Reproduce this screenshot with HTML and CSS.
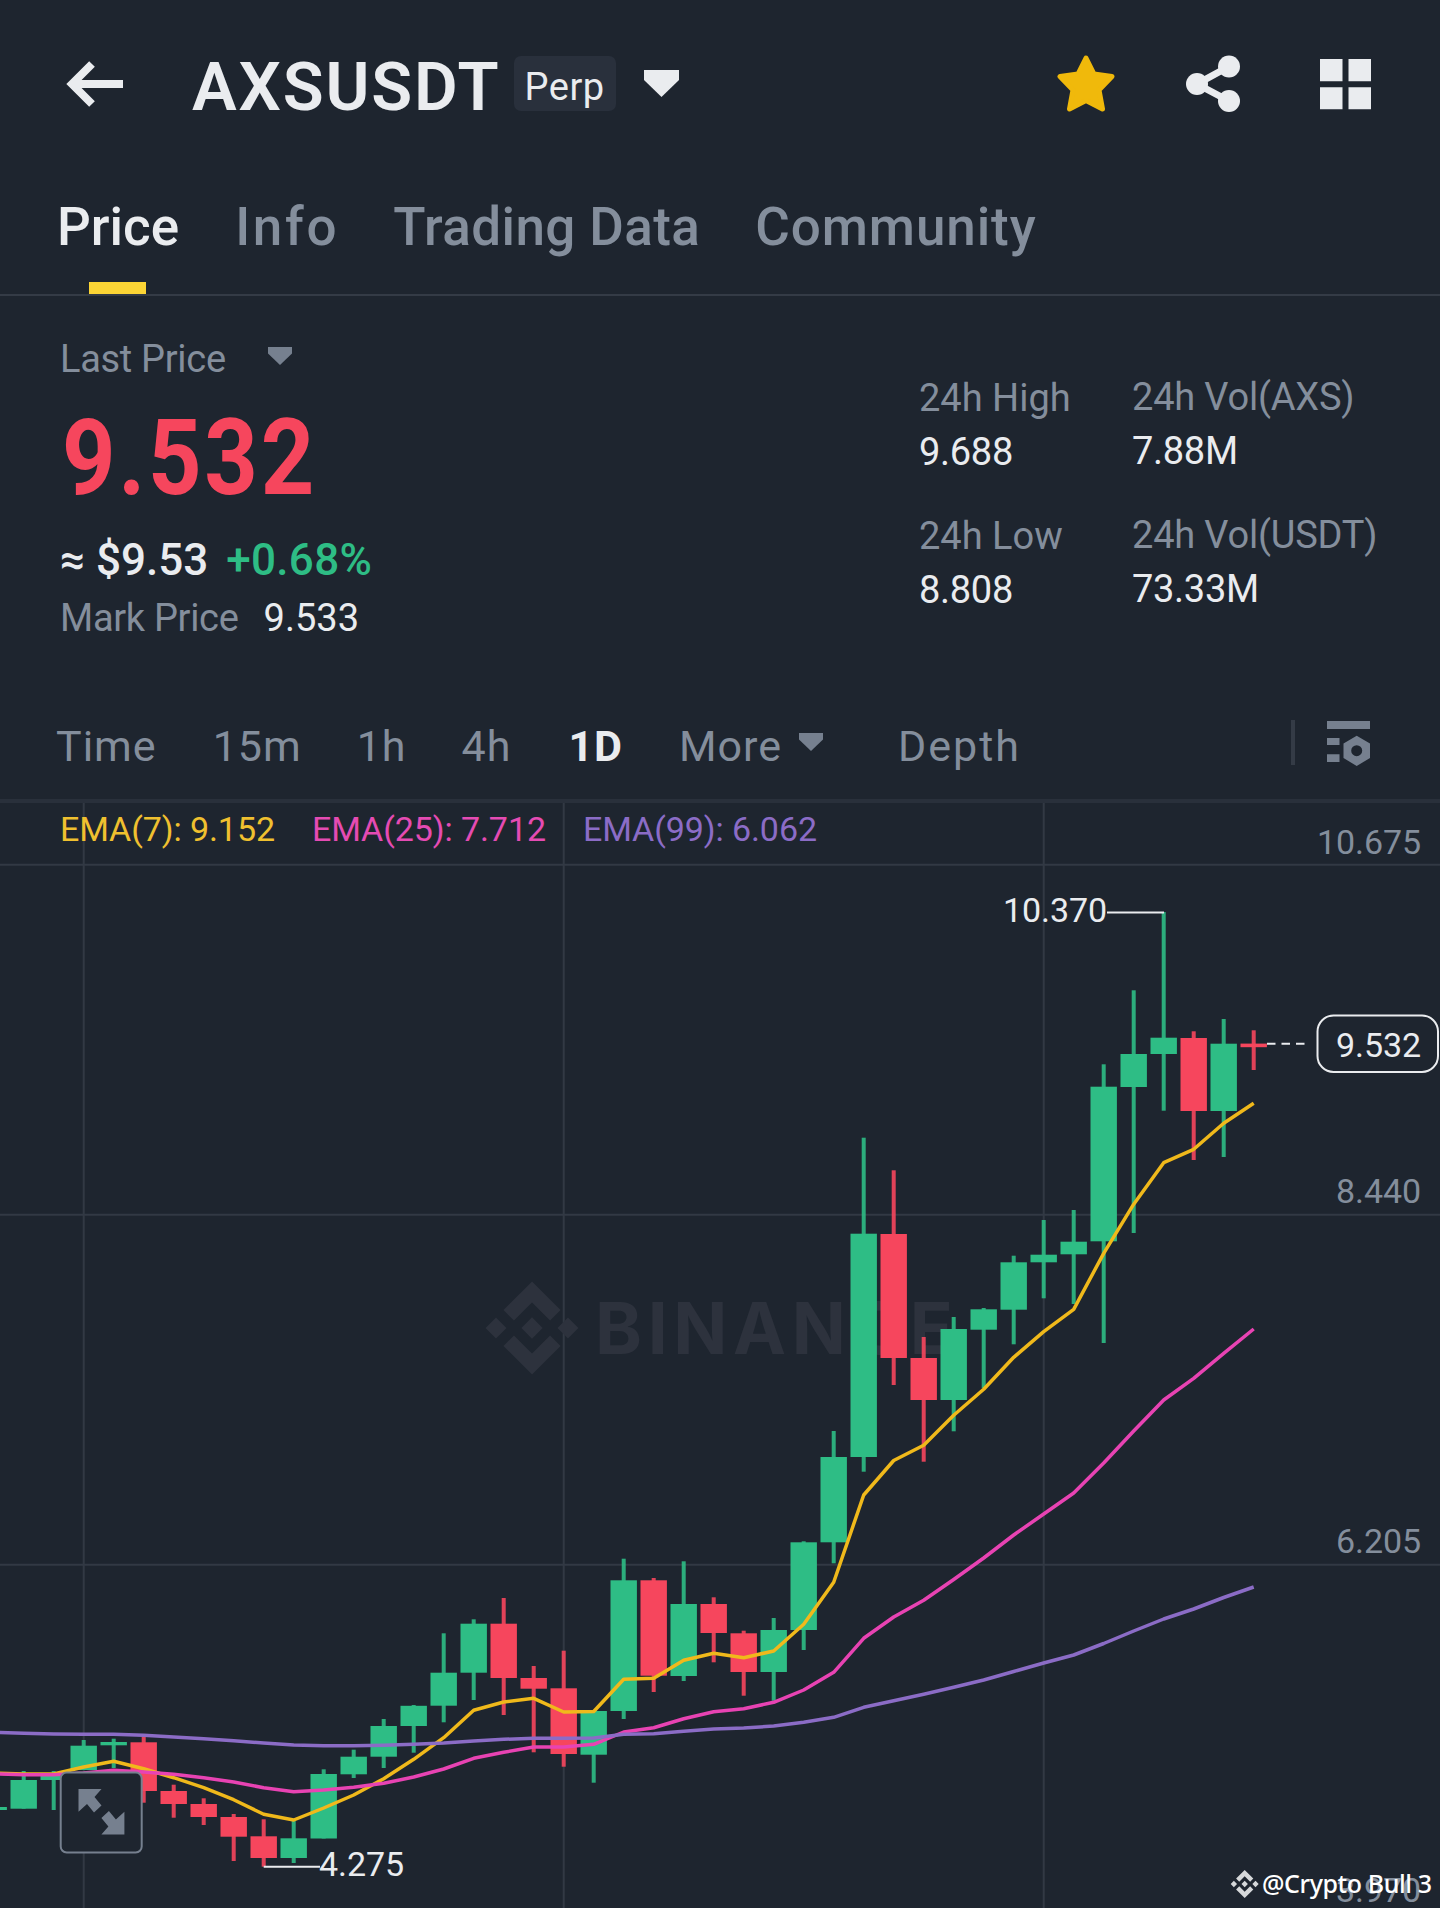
FILE: index.html
```html
<!DOCTYPE html>
<html lang="en">
<head>
  <meta charset="UTF-8" />
  <title>AXSUSDT Perp</title>
  <link rel="stylesheet" href="styles.css">
</head>
<body>

  <header class="topbar">
    <svg class="back" width="60" height="48" viewBox="0 0 60 48">
      <path d="M26 4 L6 24 L26 44 M6 24 H57" fill="none" stroke="#eaecef" stroke-width="8" />
    </svg>
    <h1>AXSUSDT</h1>
    <span class="perp">Perp</span>
    <svg class="caret" width="36" height="28" viewBox="0 0 36 28"><path d="M0 0H35V10L17.500 27L0 10Z" fill="#eaecef" /></svg>
    <div class="actions">
      <svg width="58" height="58" viewBox="0 0 58 58">
        <path d="M29 3L37 19L55 21.500L42 35L45.500 54L29 45.500L12.500 54L16 35L3 21.500L21 19Z" fill="#f0b90b" stroke="#f0b90b" stroke-width="5" stroke-linejoin="round" />
      </svg>
      <svg width="54" height="58" viewBox="0 0 54 58" fill="#eaecef">
        <path d="M43 11.500L11 29L43 46" fill="none" stroke="#eaecef" stroke-width="7" />
        <circle cx="43" cy="11.500" r="11" /><circle cx="11" cy="29" r="11" /><circle cx="43" cy="46" r="11" />
      </svg>
      <svg width="52" height="52" viewBox="0 0 52 52" fill="#eaecef">
        <path d="M0 1H22.500V23.300H0ZM28.500 1H51V23.300H28.500ZM0 29.300H22.500V51.300H0ZM28.500 29.300H51V51.300H28.500Z" />
      </svg>
    </div>
  </header>

  <nav class="tabs">
    <a class="active">Price</a>
    <a class="info">Info</a>
    <a class="trading">Trading Data</a>
    <a class="community">Community</a>
  </nav>

  <section class="summary">
    <div class="quote">
      <div class="label">
        <span>Last Price</span>
        <svg width="24" height="18" viewBox="0 0 24 18"><path d="M0 0H24V6.500L12 18L0 6.500Z" fill="#76808f" /></svg>
      </div>
      <div class="last">9.532</div>
      <div class="fiat"><span>≈ $9.53</span><span class="up">+0.68%</span></div>
      <div class="mark"><span>Mark Price</span><b>9.533</b></div>
    </div>
    <div class="stats">
      <div class="stat"><span>24h High</span><b>9.688</b></div>
      <div class="stat"><span>24h Low</span><b>8.808</b></div>
    </div>
    <div class="stats vol">
      <div class="stat"><span>24h Vol(AXS)</span><b>7.88M</b></div>
      <div class="stat"><span>24h Vol(USDT)</span><b>73.33M</b></div>
    </div>
  </section>

  <nav class="frames">
    <a>Time</a>
    <a class="minutes">15m</a>
    <a>1h</a>
    <a>4h</a>
    <a class="active">1D</a>
    <a class="more">More
      <svg width="24" height="18" viewBox="0 0 24 18"><path d="M0 0H24V6.500L12 18L0 6.500Z" fill="#76808f" /></svg>
    </a>
    <a class="depth">Depth</a>
    <span class="divider"></span>
    <svg class="prefs" width="44" height="46" viewBox="0 0 44 46" fill="#76808f">
      <path d="M0 0H43V8H0ZM0 17H12.500V24H0ZM0 33.300H12.500V41H0Z" />
      <path fill-rule="evenodd" d="M29.700 14.700L43 22.500V37L29.700 45L16.500 37V22.500ZM29.700 24.200A5.500 5.500 0 1 0 29.700 35.200A5.500 5.500 0 1 0 29.700 24.200Z" />
    </svg>
  </nav>

  <!-- chart coordinates are page pixels, the first 803 belong to the header -->
  <svg class="chart" width="1440" height="1105" viewBox="0 803 1440 1105">
    <path class="grid" d="M83.700 803V1908M563.700 803V1908M1043.700 803V1908M0 864.700H1440M0 1214.700H1440M0 1564.700H1440" />

    <g class="watermark">
      <path transform="translate(485.500 1281.500) scale(.7345)" d="M38.730 53.200l24.590-24.580 24.600 24.600 14.300-14.310L63.320 0 24.430 38.900zM0 63.310l14.300-14.310 14.310 14.310-14.310 14.300zM38.730 73.410L63.320 98l24.600-24.600 14.310 14.290-38.900 38.910L24.430 87.730zM98 63.310l14.300-14.310 14.310 14.300-14.310 14.320zM77.830 63.300L63.320 48.780 48.810 63.270l14.510 14.530z" />
      <text x="595" y="1354" textLength="358">BINANCE</text>
    </g>

    <g id="candles"></g>
    <g id="lines"></g>

    <text class="ema7" x="60" y="841" textLength="215">EMA(7): 9.152</text>
    <text class="ema25" x="312" y="841" textLength="234">EMA(25): 7.712</text>
    <text class="ema99" x="583" y="841" textLength="234">EMA(99): 6.062</text>

    <text class="axis" x="1317" y="854" textLength="104">10.675</text>
    <text class="axis" x="1336" y="1203" textLength="85">8.440</text>
    <text class="axis" x="1336" y="1553" textLength="85">6.205</text>
    <text class="axis" x="1336" y="1902" textLength="85">3.970</text>

    <path class="pointer" d="M1107 912.500H1164M263.700 1866.700H320" />
    <text class="note" x="1003" y="922" textLength="104">10.370</text>
    <text class="note" x="319" y="1876" textLength="85">4.275</text>

    <path class="pointer" d="M1267 1043.700H1305" stroke-dasharray="8.500 6" />
    <rect class="tag" x="1317.500" y="1015.500" width="120.500" height="56.500" rx="16" />
    <text class="note" x="1336" y="1057" textLength="85">9.532</text>

    <g class="expand">
      <rect x="60.700" y="1772.500" width="81" height="80" rx="6" />
      <path d="M78.500 1789H101.500L94.500 1797L101.500 1805.500L94 1812.500L87 1804L78.500 1811.700ZM124.400 1834.400H101.400L108.400 1826.400L101.400 1817.900L108.900 1810.900L115.900 1819.400L124.400 1811.700Z" />
    </g>

    <g class="author">
      <path transform="translate(1230.700 1870) scale(.221)" d="M38.730 53.200l24.590-24.580 24.600 24.600 14.300-14.310L63.320 0 24.430 38.900zM0 63.310l14.300-14.310 14.310 14.310-14.310 14.300zM38.730 73.410L63.320 98l24.600-24.600 14.310 14.290-38.900 38.910L24.430 87.730zM98 63.310l14.300-14.310 14.310 14.300-14.310 14.320zM77.830 63.300L63.320 48.780 48.810 63.270l14.510 14.530z" />
      <text x="1262" y="1893" textLength="170">@Crypto Bull 3</text>
    </g>
  </svg>

  <script src="chart.js"></script>
</body>
</html>
```
FILE: styles.css
```css
body {
  margin: 0;
  width: 1440px;
  height: 1908px;
  overflow: hidden;
  background: #1e252f;
  color: #eaecef;
  font-family: Roboto, sans-serif;
}

svg {
  display: block;
  flex: none;
}

b {
  font-weight: 400;
}

.topbar {
  display: flex;
  align-items: center;
  box-sizing: border-box;
  height: 167px;
  padding: 0 68px 0 66px;
}

h1 {
  margin: 0 0 0 66px;
  padding-top: 7px;
  font-size: 67px;
  font-weight: 600;
  letter-spacing: 1.8px;
}

.perp {
  box-sizing: border-box;
  width: 102px;
  height: 55px;
  margin-left: 13px;
  padding: 6px 0 0 11px;
  border-radius: 7px;
  background: #29303c;
  font-size: 38px;
  line-height: 50px;
  letter-spacing: 0.5px;
}

.caret {
  margin-left: 28px;
}

.actions {
  display: flex;
  align-items: center;
  margin-left: auto;
}

.actions svg + svg {
  margin-left: 71px;
}

.actions svg:last-child {
  margin-left: 80px;
}

.tabs {
  display: flex;
  gap: 55px;
  height: 97px;
  padding: 30px 57px 0;
  border-bottom: 2px solid #343b46;
  font-size: 53px;
  font-weight: 500;
  line-height: 60px;
  color: #848e9c;
}

.tabs a {
  position: relative;
}

.tabs .active {
  color: #eaecef;
}

.tabs .active::after {
  content: "";
  position: absolute;
  left: 32px;
  top: 85px;
  width: 57px;
  height: 12px;
  background: #fcd535;
}

.info {
  margin-left: 1px;
  letter-spacing: 2.7px;
}

.trading {
  margin-left: -1px;
  letter-spacing: 0.4px;
}

.community {
  letter-spacing: 0.9px;
}

.summary {
  display: flex;
  height: 384px;
  font-size: 38px;
  line-height: 50px;
}

.quote {
  box-sizing: border-box;
  width: 919px;
  padding: 38px 0 0 60px;
}

.label {
  display: flex;
  align-items: center;
  gap: 42px;
  color: #848e9c;
}

.label span, .mark span {
  letter-spacing: -0.3px;
}

.label svg {
  margin-top: -7px;
}

.last {
  margin: 25px 0 0 2px;
  font-size: 105px;
  font-weight: 700;
  line-height: 100px;
  letter-spacing: 3px;
  color: #f6465d;
  transform: scaleX(0.89);
  transform-origin: left;
}

.fiat {
  display: flex;
  gap: 18px;
  margin-top: 23px;
  font-size: 44px;
  font-weight: 500;
  line-height: 56px;
}

.up {
  letter-spacing: 0.3px;
  color: #2ebd85;
}

.mark {
  display: flex;
  gap: 25px;
  margin-top: 5px;
  color: #848e9c;
}

.mark b {
  color: #eaecef;
}

.stats {
  width: 213px;
  padding-top: 75px;
}

.vol {
  width: auto;
  padding-top: 74px;
}

.vol .stat {
  letter-spacing: -0.2px;
}

.stat {
  margin-bottom: 30px;
  line-height: 54px;
  color: #848e9c;
}

.stat span, .stat b {
  display: block;
}

.stat b {
  letter-spacing: -0.3px;
  color: #eaecef;
}

.frames {
  display: flex;
  gap: 55px;
  box-sizing: border-box;
  height: 123px;
  padding: 41px 69px 0 56px;
  border-bottom: 4px solid #29303b;
  font-size: 43px;
  line-height: 50px;
  letter-spacing: 1px;
  color: #848e9c;
}

.minutes {
  margin-left: 1px;
}

.frames .active {
  margin-left: 2px;
  font-weight: 700;
  color: #eaecef;
}

.more {
  display: flex;
  gap: 17px;
  margin-left: 1px;
}

.more svg {
  margin-top: 12px;
}

.depth {
  margin-left: 20px;
  letter-spacing: 2px;
}

.divider {
  width: 4px;
  height: 45px;
  margin: -1px -23px 0 auto;
  background: #343b46;
}

.chart text {
  font-size: 34px;
}

.grid {
  stroke: #323944;
  stroke-width: 2;
}

.watermark {
  fill: #2d323d;
}

.watermark text {
  font-family: Inter, sans-serif;
  font-size: 71px;
  font-weight: 700;
}

#lines polyline {
  fill: none;
  stroke-width: 3.5;
  stroke-linejoin: round;
}

.ema7 { fill: #f0c02f; }
.ema25 { fill: #e54bb3; }
.ema99 { fill: #8b6cc6; }
.axis { fill: #848e9c; }
.note { fill: #eaecef; }

.pointer {
  fill: none;
  stroke: #eaecef;
  stroke-width: 2;
}

.tag {
  fill: #1e252f;
  stroke: #eaecef;
  stroke-width: 2;
}

.expand rect {
  fill: #1e252f;
  stroke: #76808f;
  stroke-width: 2;
}

.expand path {
  fill: #76808f;
}

.author {
  fill: #fff;
}

.author path {
  fill: #d6d8da;
}

.chart .author text {
  font-family: "Noto Sans", sans-serif;
  font-size: 25px;
  font-weight: 500;
}
```
FILE: chart.js
```js
const UP = "#2ebd85";
const DOWN = "#f6465d";
const STEP = 30;
const FIRST = -6.3;

// [direction, high, body top, body bottom, low]
const candles = [
  [1, 1807, 1807, 1810, 1810], [1, 1771, 1780, 1808.7, 1808.7], [1, 1771, 1776, 1780, 1810],
  [1, 1740, 1745.7, 1770, 1770], [1, 1738.7, 1742, 1745.3, 1768], [0, 1736.7, 1742.3, 1791, 1802.7],
  [0, 1784.7, 1791, 1804, 1817.7], [0, 1798.3, 1804, 1817, 1825], [0, 1814, 1817, 1836.7, 1861],
  [0, 1819.3, 1836.3, 1858, 1866.7], [1, 1821, 1838.3, 1858, 1863], [1, 1769.3, 1774, 1838.5, 1838.5],
  [1, 1749.7, 1756.7, 1774.3, 1778], [1, 1719, 1726, 1756.7, 1768], [1, 1705, 1705.8, 1726, 1752.7],
  [1, 1633.3, 1672.7, 1705.7, 1722.3], [1, 1619.3, 1623.7, 1672.7, 1700], [0, 1598, 1623.7, 1678, 1715],
  [0, 1666, 1678, 1688.7, 1752.3], [0, 1650.7, 1688.3, 1754, 1766.7], [1, 1710, 1711, 1754.7, 1782.7],
  [1, 1558.7, 1580.3, 1711, 1719], [0, 1578, 1580.3, 1675.7, 1692], [1, 1561.3, 1604, 1676, 1681],
  [0, 1597.3, 1604, 1633, 1662.3], [0, 1630.7, 1633.3, 1672, 1695.7], [1, 1618, 1630, 1672, 1700.7],
  [1, 1541.3, 1542.3, 1630, 1650], [1, 1431, 1457, 1542.3, 1563.3], [1, 1137.7, 1233.7, 1457, 1471.7],
  [0, 1170.3, 1234, 1358, 1385], [0, 1337, 1358, 1400, 1461.7], [1, 1317, 1329, 1400, 1431.3],
  [1, 1308, 1309.3, 1329.7, 1388.3], [1, 1255.7, 1262.3, 1309.7, 1344.3], [1, 1220, 1254.7, 1262.3, 1298.3],
  [1, 1210, 1241.7, 1254.3, 1304], [1, 1064.3, 1086.7, 1241.3, 1343], [1, 990.3, 1054, 1087, 1233],
  [1, 912, 1037.7, 1054, 1110.7], [0, 1031.3, 1038, 1111, 1160], [1, 1019, 1043.7, 1111, 1157],
  [0, 1030.3, 1043.6, 1047.2, 1070]
];

const averages = {
  "#f0b91b": [1773, 1774, 1774, 1767, 1761.3, 1768.7, 1777.7, 1787.7, 1799.7, 1814.3, 1820, 1808, 1795,
    1778.7, 1759.3, 1737.7, 1710.3, 1702, 1698.3, 1712, 1711.5, 1679.3, 1678.3, 1660.3, 1653.3, 1657.7, 1651,
    1624.3, 1582.3, 1495, 1460.5, 1445.3, 1415.3, 1389.3, 1357.3, 1331.7, 1309.3, 1253.3, 1204.2, 1162.7,
    1149.3, 1123.3, 1103.3],
  "#e843b3": [1773.7, 1774.7, 1774.7, 1773, 1770.3, 1772, 1774.3, 1777.7, 1782, 1787.7, 1791.7, 1790, 1787.3,
    1783.3, 1777, 1769, 1758.3, 1752.3, 1747, 1747, 1744.3, 1732, 1727.7, 1718.7, 1711.7, 1708.7, 1702.3, 1690,
    1672.3, 1638.3, 1617, 1600.3, 1579.5, 1558, 1535, 1514, 1493, 1463, 1431, 1400, 1378.3, 1353.3, 1329],
  "#8b6cc6": [1732.3, 1733.3, 1734, 1734.3, 1734.3, 1735.3, 1737, 1738.7, 1740.7, 1743, 1745, 1745.7, 1745.7,
    1745.3, 1744.3, 1743, 1741, 1739.3, 1738.3, 1738.3, 1738, 1734.3, 1733.7, 1731.3, 1729, 1728, 1726, 1722.3,
    1717.3, 1707.3, 1700.7, 1694.3, 1687.3, 1680, 1671.5, 1663, 1655, 1643.5, 1631, 1619, 1609, 1597.5, 1587]
};

const xAt = i => FIRST + i * STEP;

document.getElementById("candles").innerHTML = candles.map(([up, high, top, bottom, low], i) => {
  const x = xAt(i);
  return `<g fill="${up ? UP : DOWN}">
    <rect x="${x - 2}" y="${high}" width="4" height="${low - high}" opacity="0.9" />
    <rect x="${x - 13.2}" y="${top}" width="26.4" height="${bottom - top}" />
  </g>`;
}).join("");

document.getElementById("lines").innerHTML = Object.entries(averages).map(([color, ys]) => {
  const points = ys.map((y, i) => `${xAt(i)},${y}`).join(" ");
  return `<polyline points="${points}" stroke="${color}" />`;
}).join("");
```
